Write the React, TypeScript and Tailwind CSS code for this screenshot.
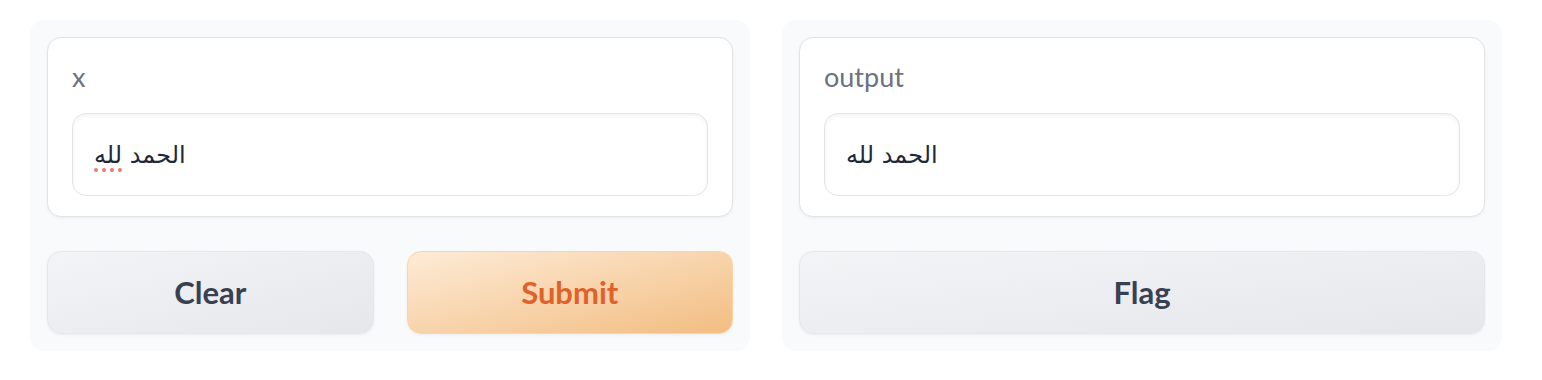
const sans = "font-['Lato','Noto_Sans',sans-serif]"

function Field({ label, value, marked }: { label: string; value: string; marked?: boolean }) {
  return (
    <div className="flex flex-col rounded-[14px] border border-[#e4e4e7] bg-white px-[24px] pt-[21px] pb-[20px] shadow-[0_1px_3px_rgba(0,0,0,0.06)]">
      <span className="text-[27px] leading-[36px] text-[#6b7280] mb-[18px]">{label}</span>
      <div className="flex h-[83px] items-center rounded-[14px] border border-[#e4e4e7] bg-white px-[21px] shadow-[inset_0_2px_4px_rgba(0,0,0,0.05)]">
        <span dir="auto" className="text-[24px] text-[#1f2937] font-['DejaVu_Sans',sans-serif]">
          {marked ? (
            <>
              الحمد{' '}
              <span className="underline decoration-dotted decoration-[#ef7b6b] decoration-[4px] underline-offset-[6px]">لله</span>
            </>
          ) : (
            value
          )}
        </span>
      </div>
    </div>
  )
}

export default function App() {
  return (
    <div className={`${sans} flex items-start gap-[32px] pl-[30px] pt-[20px] bg-white min-h-[380px]`}>
      {/* input column */}
      <div className="flex w-[720px] flex-col gap-[34px] rounded-[14px] bg-[#f9fafb] p-[17px]">
        <Field label="x" value="الحمد لله" marked />
        <div className="flex gap-[33px]">
          <button className="flex-1 h-[83px] rounded-[14px] border border-[#e5e7eb] bg-gradient-to-br from-[#f3f4f6] to-[#e5e7eb] text-[31px] font-bold text-[#374151] shadow-[0_1px_3px_rgba(0,0,0,0.06)]">
            Clear
          </button>
          <button className="flex-1 h-[83px] rounded-[14px] border border-[#fbd5a5] bg-gradient-to-br from-[#fdebd6] to-[#f2bd81] text-[31px] font-bold text-[#df612b] shadow-[0_1px_3px_rgba(0,0,0,0.06)]">
            Submit
          </button>
        </div>
      </div>

      {/* output column */}
      <div className="flex w-[720px] flex-col gap-[34px] rounded-[14px] bg-[#f9fafb] p-[17px]">
        <Field label="output" value="الحمد لله" />
        <button className="h-[83px] w-full rounded-[14px] border border-[#e5e7eb] bg-gradient-to-br from-[#f3f4f6] to-[#e5e7eb] text-[31px] font-bold text-[#374151] shadow-[0_1px_3px_rgba(0,0,0,0.06)]">
          Flag
        </button>
      </div>
    </div>
  )
}
